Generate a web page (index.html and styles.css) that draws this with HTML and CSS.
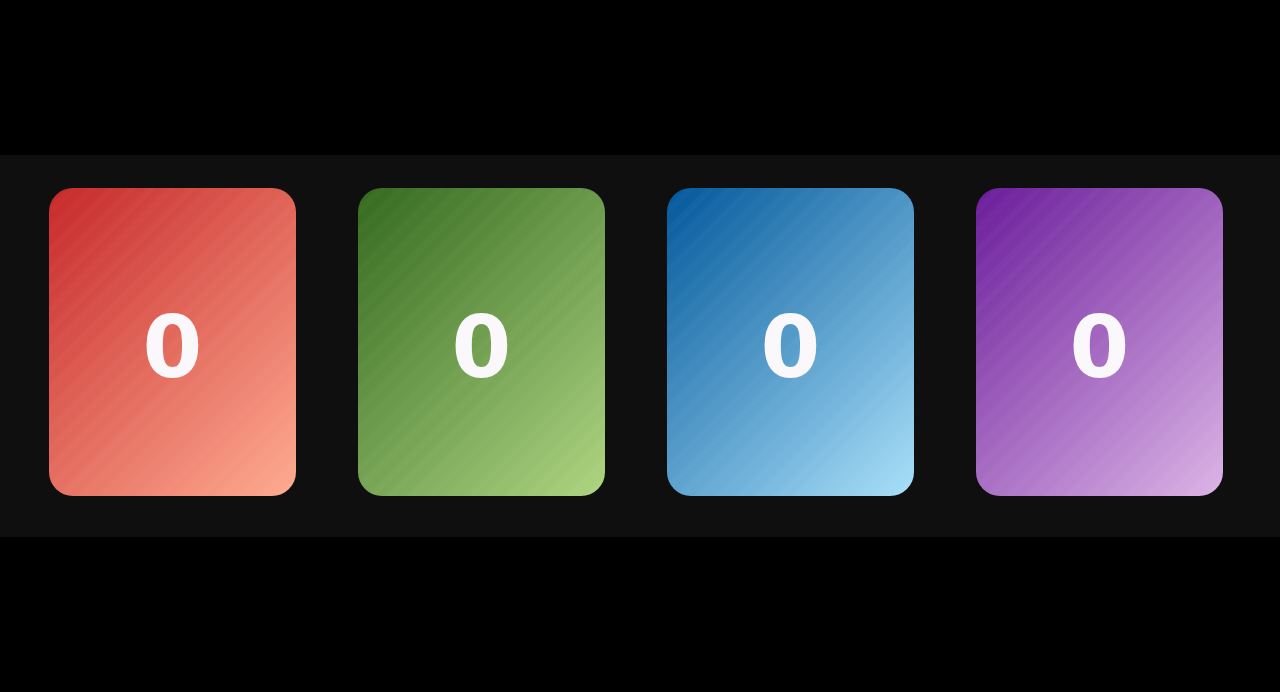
FILE: index.html
```html
<!DOCTYPE html>
<html>
<head>
<meta charset="utf-8">
<link rel="stylesheet" href="styles.css">
</head>
<body>
<div class="stage">
  <div class="band">
    <div class="card red"><span class="num">0</span></div>
    <div class="card green"><span class="num">0</span></div>
    <div class="card blue"><span class="num">0</span></div>
    <div class="card purple"><span class="num">0</span></div>
  </div>
</div>
</body>
</html>
```
FILE: styles.css
```css
html, body {
  margin: 0;
  padding: 0;
  background: #000;
  height: 100%;
}
.stage {
  height: 692px;
  display: flex;
  flex-direction: column;
  justify-content: center;
}
.band {
  background: #0f0f0f;
  height: 382px;
  box-sizing: border-box;
  padding: 33px 57px 41px 49px;
  display: flex;
  gap: 62px;
}
.card {
  width: 247px;
  height: 308px;
  border-radius: 24px;
  display: flex;
  align-items: center;
  justify-content: center;
  position: relative;
  overflow: hidden;
}
.card::after {
  content: "";
  position: absolute;
  inset: 0;
  background: repeating-linear-gradient(135deg, rgba(255,255,255,0.02) 0 6px, rgba(255,255,255,0) 6px 14px);
}
.num {
  font-family: "DejaVu Sans", sans-serif;
  font-weight: 700;
  font-size: 86px;
  line-height: 1;
  color: #fbf8fb;
  position: relative;
  z-index: 1;
  margin-top: 10px;
}
.red { background: linear-gradient(135deg, #c62828, #ffab91); }
.green { background: linear-gradient(135deg, #33691e, #aed581); }
.blue { background: linear-gradient(135deg, #01579b, #a9e0f9); }
.purple { background: linear-gradient(135deg, #6a1b9a, #dcb4e6); }
```
